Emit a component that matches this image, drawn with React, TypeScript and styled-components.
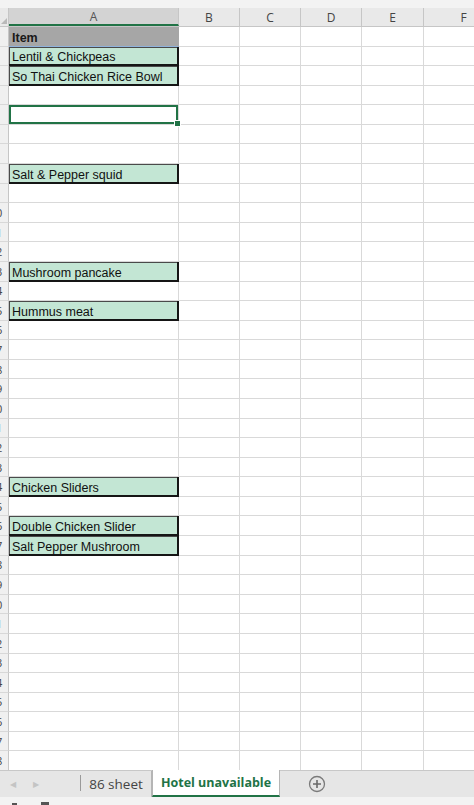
import React from 'react';
import styled, { createGlobalStyle } from 'styled-components';

const GlobalStyle = createGlobalStyle`
    html, body {
        margin: 0;
        padding: 0;
        background: #ffffff;
        overflow: hidden;
    }
`;

const ROW_H = 19.58;
const COLS = [
    { key: 'A', width: 170 },
    { key: 'B', width: 61 },
    { key: 'C', width: 61 },
    { key: 'D', width: 61 },
    { key: 'E', width: 62 },
    { key: 'F', width: 80 },
];

type CellKind = 'plain' | 'title' | 'item' | 'selected';

const cells: Record<number, { text?: string; kind: CellKind }> = {
    1: { text: 'Item', kind: 'title' },
    2: { text: 'Lentil & Chickpeas', kind: 'item' },
    3: { text: 'So Thai Chicken Rice Bowl', kind: 'item' },
    5: { kind: 'selected' },
    8: { text: 'Salt & Pepper squid', kind: 'item' },
    13: { text: 'Mushroom pancake', kind: 'item' },
    15: { text: 'Hummus meat', kind: 'item' },
    24: { text: 'Chicken Sliders', kind: 'item' },
    26: { text: 'Double Chicken Slider', kind: 'item' },
    27: { text: 'Salt Pepper Mushroom', kind: 'item' },
};

const Window = styled.div`
    width: 474px;
    height: 805px;
    display: flex;
    flex-direction: column;
    overflow: hidden;
    background: #ffffff;
`;

const TopStrip = styled.div`
    height: 8px;
    flex: none;
    background: #f3f3f3;
`;

const HeaderRow = styled.div`
    height: 18px;
    flex: none;
    display: flex;
    background: #e9e9e9;
    border-bottom: 1px solid #c6c6c6;
    box-sizing: content-box;
    font-family: 'Open Sans', 'Liberation Sans', sans-serif;
    font-size: 12px;
    color: #444;
`;

const Corner = styled.div`
    width: 9px;
    flex: none;
    border-right: 1px solid #c6c6c6;
    box-sizing: border-box;
    display: flex;
    align-items: flex-end;
    justify-content: flex-end;
    padding: 0 1px 2px 0;

    &::after {
        content: '';
        width: 0;
        height: 0;
        border-left: 6px solid transparent;
        border-bottom: 6px solid #b9b9b9;
    }
`;

const ColHead = styled.div<{ $w: number; $active?: boolean }>`
    width: ${(p) => p.$w}px;
    flex: none;
    box-sizing: border-box;
    border-right: 1px solid #c6c6c6;
    display: flex;
    align-items: center;
    justify-content: center;
    background: ${(p) => (p.$active ? '#d3d3d3' : 'transparent')};
    border-bottom: ${(p) => (p.$active ? '2px solid #217346' : 'none')};
    color: ${(p) => (p.$active ? '#555' : '#444')};
`;

const Sheet = styled.div`
    flex: 1 1 auto;
    min-height: 0;
    overflow: hidden;
    font-family: 'Liberation Sans', Arial, sans-serif;
    font-size: 12.5px;
    color: #111;
`;

const Row = styled.div`
    height: ${ROW_H}px;
    display: flex;
`;

const RowHead = styled.div`
    width: 9px;
    flex: none;
    overflow: hidden;
    display: flex;
    justify-content: flex-end;
    align-items: center;
    background: #f0f0f0;
    border-right: 1px solid #c6c6c6;
    border-bottom: 1px solid #d8d8d8;
    box-sizing: border-box;
    font-family: 'Open Sans', 'Liberation Sans', sans-serif;
    font-size: 11px;
    color: #444;
`;

const RowLabel = styled.span`
    flex: none;
    width: 24px;
    text-align: center;
`;

const Cell = styled.div<{ $w: number; $kind: CellKind }>`
    position: relative;
    width: ${(p) => p.$w}px;
    flex: none;
    box-sizing: border-box;
    border-right: 1px solid #d9d9d9;
    border-bottom: 1px solid #d9d9d9;
    display: flex;
    align-items: flex-end;
    padding: 0 3px 1px;
    white-space: nowrap;
    overflow: visible;

    ${(p) =>
        p.$kind === 'title' &&
        `
        background: #a6a6a6;
        font-weight: bold;
        color: #1a1a1a;
        border-bottom: 1px solid #8fb2dc;
        border-right-color: #a6a6a6;
    `}

    ${(p) =>
        p.$kind === 'item' &&
        `
        background: #c3e6d4;
        border-right: 2px solid #151515;
        border-bottom: 2px solid #151515;
        box-shadow: inset 1px 1px 0 #4a4a4a;
        padding-bottom: 0;
    `}

    ${(p) =>
        p.$kind === 'selected' &&
        `
        box-shadow: inset 0 0 0 2px #217346;
        &::after {
            content: '';
            position: absolute;
            right: -3px;
            bottom: -3px;
            width: 5px;
            height: 5px;
            background: #217346;
            border: 1px solid #ffffff;
            z-index: 2;
        }
    `}
`;

const TabBar = styled.div`
    height: 27px;
    flex: none;
    display: flex;
    align-items: stretch;
    background: #e6e6e6;
    border-top: 1px solid #c8c8c8;
    box-sizing: border-box;
    font-family: 'Open Sans', 'Liberation Sans', sans-serif;
`;

const NavArrows = styled.div`
    width: 81px;
    flex: none;
    display: flex;
    align-items: center;
    gap: 17px;
    padding-left: 10px;
    box-sizing: border-box;
    border-right: 1px solid #9a9a9a;
    margin: 4px 0 6px;
    color: #c4c4c4;
    font-size: 8px;
`;

const Tab = styled.div<{ $active?: boolean; $w: number }>`
    width: ${(p) => p.$w}px;
    flex: none;
    box-sizing: border-box;
    display: flex;
    align-items: center;
    justify-content: center;
    font-size: ${(p) => (p.$active ? '12.5px' : '13.5px')};
    font-weight: ${(p) => (p.$active ? 700 : 400)};
    color: ${(p) => (p.$active ? '#217346' : '#444')};
    background: ${(p) => (p.$active ? '#ffffff' : 'transparent')};
    border-left: ${(p) => (p.$active ? '1px solid #b5b5b5' : 'none')};
    border-right: 1px solid #b5b5b5;
    border-bottom: ${(p) => (p.$active ? '2px solid #217346' : 'none')};
    margin-top: ${(p) => (p.$active ? '-1px' : '0')};
`;

const AddButton = styled.div`
    margin-left: 28px;
    display: flex;
    align-items: center;
    color: #777;
`;

const StatusBar = styled.div`
    height: 8px;
    flex: none;
    background: #f3f3f3;
    display: flex;
    align-items: flex-end;
    gap: 24px;
    padding-left: 12px;
    overflow: hidden;
`;

const StatusGlyph = styled.span<{ $w: number; $h: number }>`
    width: ${(p) => p.$w}px;
    height: ${(p) => p.$h}px;
    background: #555;
`;

const ROW_COUNT = 38;

const App = (): React.ReactElement => {
    const rows = Array.from({ length: ROW_COUNT }, (_, i) => i + 1);

    return (
        <>
            <GlobalStyle />
            <Window>
                <TopStrip />
                <HeaderRow>
                    <Corner />
                    {COLS.map((col) => (
                        <ColHead key={col.key} $w={col.width} $active={col.key === 'A'}>
                            {col.key}
                        </ColHead>
                    ))}
                </HeaderRow>

                <Sheet>
                    {rows.map((r) => {
                        const data = cells[r];
                        return (
                            <Row key={r}>
                                <RowHead>
                                    <RowLabel>{r}</RowLabel>
                                </RowHead>
                                {COLS.map((col) => {
                                    const isA = col.key === 'A';
                                    const kind: CellKind = isA && data ? data.kind : 'plain';
                                    return (
                                        <Cell key={col.key} $w={col.width} $kind={kind}>
                                            {isA && data?.text}
                                        </Cell>
                                    );
                                })}
                            </Row>
                        );
                    })}
                </Sheet>

                <TabBar>
                    <NavArrows>
                        <span>◀</span>
                        <span>▶</span>
                    </NavArrows>
                    <Tab $w={71}>86 sheet</Tab>
                    <Tab $w={128} $active>
                        Hotel unavailable
                    </Tab>
                    <AddButton>
                        <svg width="18" height="18" viewBox="0 0 18 18">
                            <circle cx="9" cy="9" r="7.5" fill="none" stroke="#7a7a7a" strokeWidth="1.3" />
                            <path d="M9 5v8M5 9h8" stroke="#6a6a6a" strokeWidth="1.6" />
                        </svg>
                    </AddButton>
                </TabBar>
                <StatusBar>
                    <StatusGlyph $w={5} $h={2} />
                    <StatusGlyph $w={8} $h={3} />
                </StatusBar>
            </Window>
        </>
    );
};

export default App;
